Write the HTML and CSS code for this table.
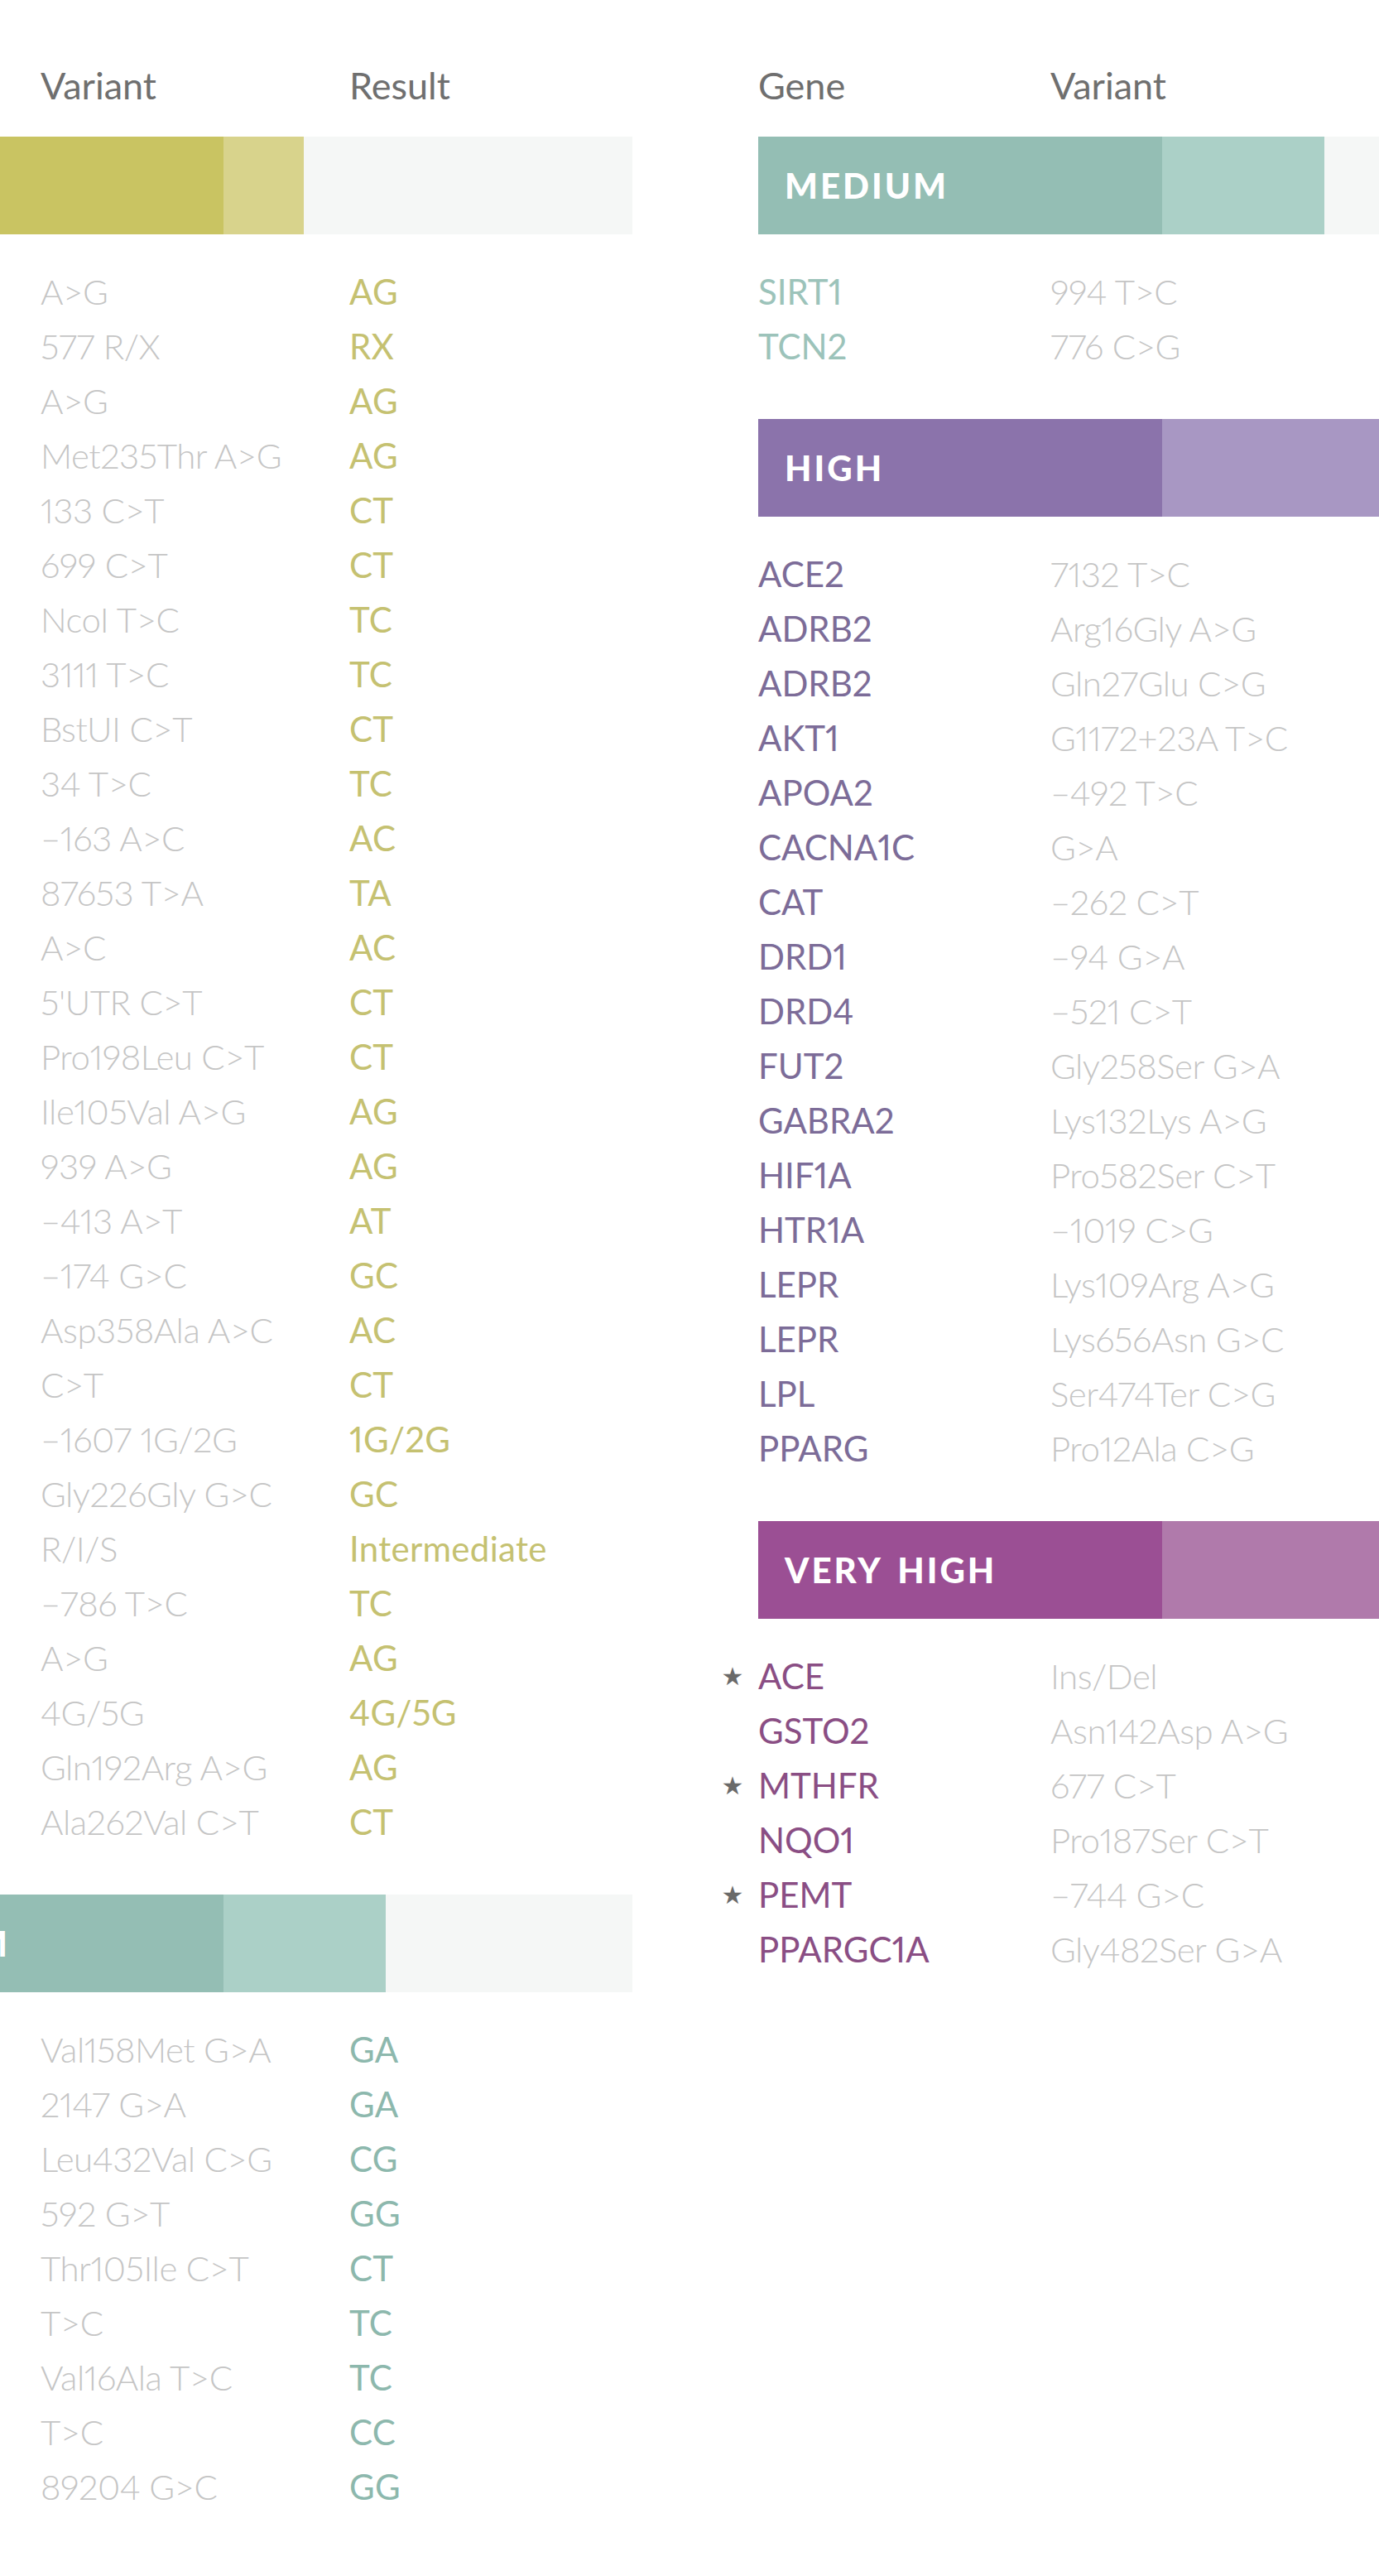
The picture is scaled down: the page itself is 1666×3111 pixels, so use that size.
FILE: index.html
```html
<!DOCTYPE html>
<html lang="en">
<head>
<meta charset="utf-8">
<title>Genetic variants</title>
<link rel="stylesheet" href="styles.css">
</head>
<body>
<div class="page">
  <section class="tbl tbl-left">
    <div class="row head"><div></div><div>Variant</div><div>Result</div></div>

    <div class="group g-yellow">
      <div class="bar"><div class="bar-dark"></div><div class="bar-light" style="width:97px"></div></div>
      <div class="rows">
        <div class="row"><div></div><div class="var">A&gt;G</div><div class="res">AG</div></div>
        <div class="row"><div></div><div class="var">577 R/X</div><div class="res">RX</div></div>
        <div class="row"><div></div><div class="var">A&gt;G</div><div class="res">AG</div></div>
        <div class="row"><div></div><div class="var">Met235Thr A&gt;G</div><div class="res">AG</div></div>
        <div class="row"><div></div><div class="var">133 C&gt;T</div><div class="res">CT</div></div>
        <div class="row"><div></div><div class="var">699 C&gt;T</div><div class="res">CT</div></div>
        <div class="row"><div></div><div class="var">NcoI T&gt;C</div><div class="res">TC</div></div>
        <div class="row"><div></div><div class="var">3111 T&gt;C</div><div class="res">TC</div></div>
        <div class="row"><div></div><div class="var">BstUI C&gt;T</div><div class="res">CT</div></div>
        <div class="row"><div></div><div class="var">34 T&gt;C</div><div class="res">TC</div></div>
        <div class="row"><div></div><div class="var">–163 A&gt;C</div><div class="res">AC</div></div>
        <div class="row"><div></div><div class="var">87653 T&gt;A</div><div class="res">TA</div></div>
        <div class="row"><div></div><div class="var">A&gt;C</div><div class="res">AC</div></div>
        <div class="row"><div></div><div class="var">5'UTR C&gt;T</div><div class="res">CT</div></div>
        <div class="row"><div></div><div class="var">Pro198Leu C&gt;T</div><div class="res">CT</div></div>
        <div class="row"><div></div><div class="var">Ile105Val A&gt;G</div><div class="res">AG</div></div>
        <div class="row"><div></div><div class="var">939 A&gt;G</div><div class="res">AG</div></div>
        <div class="row"><div></div><div class="var">–413 A&gt;T</div><div class="res">AT</div></div>
        <div class="row"><div></div><div class="var">–174 G&gt;C</div><div class="res">GC</div></div>
        <div class="row"><div></div><div class="var">Asp358Ala A&gt;C</div><div class="res">AC</div></div>
        <div class="row"><div></div><div class="var">C&gt;T</div><div class="res">CT</div></div>
        <div class="row"><div></div><div class="var">–1607 1G/2G</div><div class="res">1G/2G</div></div>
        <div class="row"><div></div><div class="var">Gly226Gly G&gt;C</div><div class="res">GC</div></div>
        <div class="row"><div></div><div class="var">R/I/S</div><div class="res">Intermediate</div></div>
        <div class="row"><div></div><div class="var">–786 T&gt;C</div><div class="res">TC</div></div>
        <div class="row"><div></div><div class="var">A&gt;G</div><div class="res">AG</div></div>
        <div class="row"><div></div><div class="var">4G/5G</div><div class="res">4G/5G</div></div>
        <div class="row"><div></div><div class="var">Gln192Arg A&gt;G</div><div class="res">AG</div></div>
        <div class="row"><div></div><div class="var">Ala262Val C&gt;T</div><div class="res">CT</div></div>
      </div>
    </div>

    <div class="group g-teal">
      <div class="bar"><div class="bar-dark"><span class="bar-label">MEDIUM</span></div><div class="bar-light" style="width:196px"></div></div>
      <div class="rows">
        <div class="row"><div></div><div class="var">Val158Met G&gt;A</div><div class="res">GA</div></div>
        <div class="row"><div></div><div class="var">2147 G&gt;A</div><div class="res">GA</div></div>
        <div class="row"><div></div><div class="var">Leu432Val C&gt;G</div><div class="res">CG</div></div>
        <div class="row"><div></div><div class="var">592 G&gt;T</div><div class="res">GG</div></div>
        <div class="row"><div></div><div class="var">Thr105Ile C&gt;T</div><div class="res">CT</div></div>
        <div class="row"><div></div><div class="var">T&gt;C</div><div class="res">TC</div></div>
        <div class="row"><div></div><div class="var">Val16Ala T&gt;C</div><div class="res">TC</div></div>
        <div class="row"><div></div><div class="var">T&gt;C</div><div class="res">CC</div></div>
        <div class="row"><div></div><div class="var">89204 G&gt;C</div><div class="res">GG</div></div>
      </div>
    </div>
  </section>

  <section class="tbl tbl-right">
    <div class="row head"><div>Gene</div><div>Variant</div><div></div></div>

    <div class="group g-teal">
      <div class="bar"><div class="bar-dark"><span class="bar-label">MEDIUM</span></div><div class="bar-light" style="width:196px"></div></div>
      <div class="rows">
        <div class="row"><div class="gene">SIRT1</div><div class="var">994 T&gt;C</div><div></div></div>
        <div class="row"><div class="gene">TCN2</div><div class="var">776 C&gt;G</div><div></div></div>
      </div>
    </div>

    <div class="group g-purple">
      <div class="bar"><div class="bar-dark"><span class="bar-label">HIGH</span></div><div class="bar-light" style="width:340px"></div></div>
      <div class="rows">
        <div class="row"><div class="gene">ACE2</div><div class="var">7132 T&gt;C</div><div></div></div>
        <div class="row"><div class="gene">ADRB2</div><div class="var">Arg16Gly A&gt;G</div><div></div></div>
        <div class="row"><div class="gene">ADRB2</div><div class="var">Gln27Glu C&gt;G</div><div></div></div>
        <div class="row"><div class="gene">AKT1</div><div class="var">G1172+23A T&gt;C</div><div></div></div>
        <div class="row"><div class="gene">APOA2</div><div class="var">–492 T&gt;C</div><div></div></div>
        <div class="row"><div class="gene">CACNA1C</div><div class="var">G&gt;A</div><div></div></div>
        <div class="row"><div class="gene">CAT</div><div class="var">–262 C&gt;T</div><div></div></div>
        <div class="row"><div class="gene">DRD1</div><div class="var">–94 G&gt;A</div><div></div></div>
        <div class="row"><div class="gene">DRD4</div><div class="var">–521 C&gt;T</div><div></div></div>
        <div class="row"><div class="gene">FUT2</div><div class="var">Gly258Ser G&gt;A</div><div></div></div>
        <div class="row"><div class="gene">GABRA2</div><div class="var">Lys132Lys A&gt;G</div><div></div></div>
        <div class="row"><div class="gene">HIF1A</div><div class="var">Pro582Ser C&gt;T</div><div></div></div>
        <div class="row"><div class="gene">HTR1A</div><div class="var">–1019 C&gt;G</div><div></div></div>
        <div class="row"><div class="gene">LEPR</div><div class="var">Lys109Arg A&gt;G</div><div></div></div>
        <div class="row"><div class="gene">LEPR</div><div class="var">Lys656Asn G&gt;C</div><div></div></div>
        <div class="row"><div class="gene">LPL</div><div class="var">Ser474Ter C&gt;G</div><div></div></div>
        <div class="row"><div class="gene">PPARG</div><div class="var">Pro12Ala C&gt;G</div><div></div></div>
      </div>
    </div>

    <div class="group g-magenta">
      <div class="bar"><div class="bar-dark"><span class="bar-label">VERY HIGH</span></div><div class="bar-light" style="width:440px"></div></div>
      <div class="rows">
        <div class="row"><div class="gene"><span class="star">★</span>ACE</div><div class="var">Ins/Del</div><div></div></div>
        <div class="row"><div class="gene">GSTO2</div><div class="var">Asn142Asp A&gt;G</div><div></div></div>
        <div class="row"><div class="gene"><span class="star">★</span>MTHFR</div><div class="var">677 C&gt;T</div><div></div></div>
        <div class="row"><div class="gene">NQO1</div><div class="var">Pro187Ser C&gt;T</div><div></div></div>
        <div class="row"><div class="gene"><span class="star">★</span>PEMT</div><div class="var">–744 G&gt;C</div><div></div></div>
        <div class="row"><div class="gene">PPARGC1A</div><div class="var">Gly482Ser G&gt;A</div><div></div></div>
      </div>
    </div>
  </section>
</div>
</body>
</html>
```

FILE: styles.css
```css
html, body {
  margin: 0;
  padding: 0;
  background: #ffffff;
}

body {
  width: 1666px;
  height: 3111px;
  overflow: hidden;
  font-family: "Lato", "Open Sans", sans-serif;
}

.page {
  display: flex;
  gap: 152px;
  margin-left: -218px;
  padding-top: 70px;
}

.tbl {
  width: 982px;
  flex-shrink: 0;
}

.row {
  display: grid;
  height: 66px;
  line-height: 66px;
  font-size: 42px;
  white-space: nowrap;
  font-variant-numeric: proportional-nums;
}

.tbl-left .row {
  grid-template-columns: 267px 373px 1fr;
}

.tbl-right .row {
  grid-template-columns: 353px 420px 1fr;
}

.row.head {
  color: #6f6f6f;
  font-weight: 400;
  font-size: 45px;
  margin-bottom: 29px;
}

.group + .group {
  margin-top: 55px;
}

.bar {
  display: flex;
  height: 118px;
  background: #f5f7f6;
  margin-bottom: 36px;
}

.bar-dark {
  width: 488px;
  flex-shrink: 0;
  display: flex;
  align-items: center;
  padding-left: 32px;
  box-sizing: border-box;
}

.bar-light {
  flex-shrink: 0;
}

.bar-label {
  color: #ffffff;
  font-size: 42px;
  font-weight: 900;
  letter-spacing: 3px;
  word-spacing: 6px;
  white-space: nowrap;
}

.var {
  color: #c5c5c5;
  font-weight: 300;
  letter-spacing: -0.5px;
}

.gene {
  font-weight: 400;
}

.res {
  font-weight: 400;
  letter-spacing: 0.3px;
}

.star {
  display: inline-block;
  width: 28px;
  margin-left: -45px;
  margin-right: 17px;
  font-family: "DejaVu Sans", sans-serif;
  font-size: 30px;
  line-height: 66px;
  text-align: center;
  color: #6a6a6a;
  vertical-align: top;
  position: relative;
  top: 1px;
}

/* yellow */
.g-yellow .bar-dark { background: #c9c462; }
.g-yellow .bar-light { background: #d8d38c; }
.g-yellow .res { color: #c5c171; }

/* teal */
.g-teal .bar-dark { background: #94beb4; }
.g-teal .bar-light { background: #abd0c7; }
.g-teal .res { color: #8db8ad; }
.g-teal .gene { color: #9cc3ba; }

/* purple */
.g-purple .bar-dark { background: #8b73ab; }
.g-purple .bar-light { background: #a897c3; }
.g-purple .gene { color: #7c6c98; }

/* magenta */
.g-magenta .bar-dark { background: #9b4f94; }
.g-magenta .bar-light { background: #b07aab; }
.g-magenta .gene { color: #8a4e84; }
```
